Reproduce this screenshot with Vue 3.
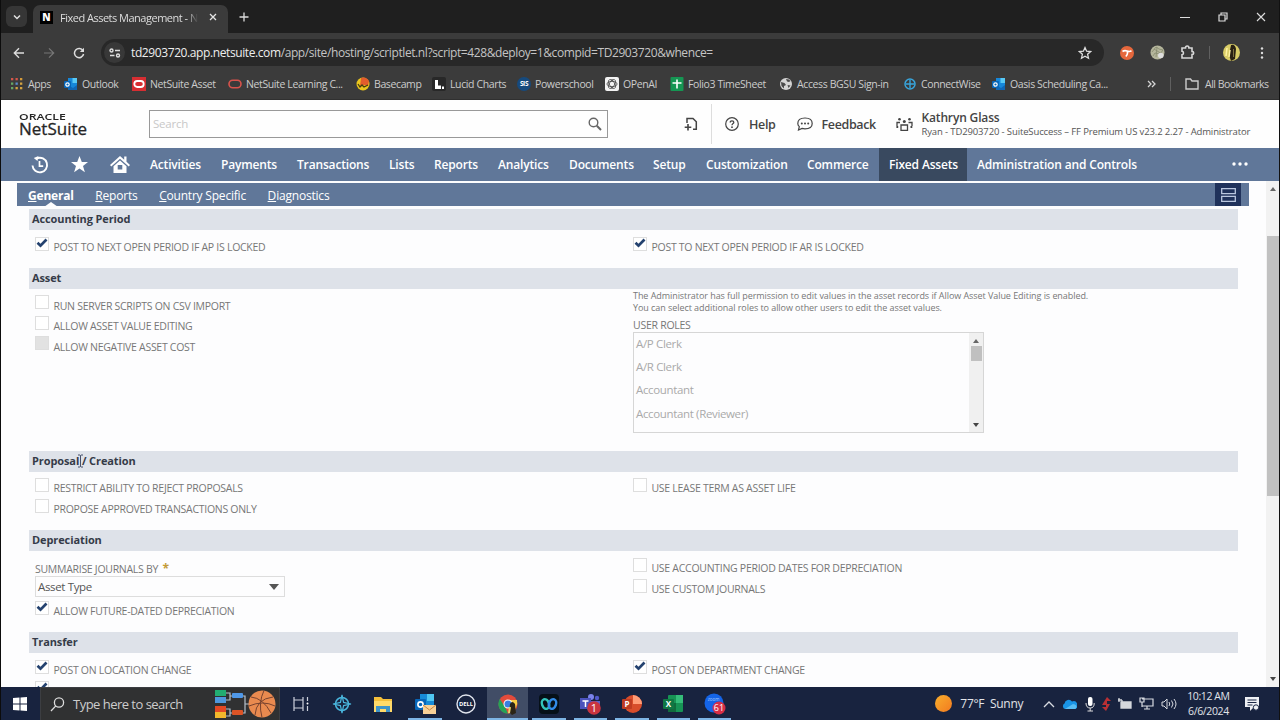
<template>
  <div class="screen">
    <!-- 浏览器标签栏 -->
    <div class="tab-strip">
      <button class="tab-search">
        <svg width="10" height="8" viewBox="0 0 10 8"><path d="M2 2.5l3 3 3-3" fill="none" stroke="#e0e0e0" stroke-width="1.5" /></svg>
      </button>
      <div class="tab">
        <span class="favicon">N</span>
        <span class="tab-title">Fixed Assets Management - Net</span>
        <svg class="tab-close" width="8" height="8" viewBox="0 0 8 8"><path d="M1 1l6 6M7 1l-6 6" stroke="#e4e4e4" stroke-width="1.3" /></svg>
      </div>
      <svg class="tab-new" width="10" height="10" viewBox="0 0 10 10"><path d="M5 0.5v9M0.500 5h9" stroke="#dcdcdc" stroke-width="1.3" /></svg>
      <div class="window-controls">
        <svg width="10" height="10" viewBox="0 0 10 10"><path d="M0 5.500h10" stroke="#ddd" /></svg>
        <svg width="10" height="10" viewBox="0 0 10 10"><path d="M1 3h6v6h-6zM3 3V1h6v6H7" fill="none" stroke="#ddd" stroke-width="1.2" /></svg>
        <svg width="10" height="10" viewBox="0 0 10 10"><path d="M1 1l8 8M9 1l-8 8" stroke="#ddd" stroke-width="1.1" /></svg>
      </div>
    </div>

    <!-- 地址栏 -->
    <div class="toolbar">
      <div class="history-buttons">
        <svg width="12" height="12" viewBox="0 0 12 12"><path d="M11 6H1.500M6 1.300L1.300 6 6 10.700" fill="none" stroke="#dedede" stroke-width="1.4" /></svg>
        <svg width="12" height="12" viewBox="0 0 12 12"><path d="M1 6h9.500M6 1.300L10.700 6 6 10.700" fill="none" stroke="#777" stroke-width="1.2" /></svg>
        <svg width="12" height="12" viewBox="0 0 12 12"><path d="M10 3.600A4.600 4.600 0 1 0 10.600 7" fill="none" stroke="#dedede" stroke-width="1.5" /><path d="M11 0.800v4.200H6.800z" fill="#dedede" /></svg>
      </div>
      <div class="address">
        <span class="site-info">
          <svg width="12" height="10" viewBox="0 0 12 10" fill="none" stroke="#ddd" stroke-width="1.4"><circle cx="2.500" cy="2.500" r="1.500" /><path d="M6 2.500h5M1 7.500h4.500" /><circle cx="9" cy="7.500" r="1.500" /></svg>
        </span>
        <span class="url"><b>td2903720.app.netsuite.com</b>/app/site/hosting/scriptlet.nl?script=428&amp;deploy=1&amp;compid=TD2903720&amp;whence=</span>
        <svg class="star" width="14" height="14" viewBox="0 0 14 14"><path d="M7 1.600l1.600 3.600 4 .4-3 2.700.9 3.900L7 10.200l-3.500 2 .9-3.900-3-2.700 4-.4z" fill="none" stroke="#dedede" stroke-width="1.300" /></svg>
      </div>
      <div class="extensions">
        <svg width="14" height="14" viewBox="0 0 14 14"><circle cx="7" cy="7" r="7" fill="#e5673c" /><path d="M2.500 5.500q2-1.500 4.500-.5t4.500-.2M7.500 5.200Q8 8.500 5.800 10.500" fill="none" stroke="#fff" stroke-width="1.600" /></svg>
        <svg width="15" height="15" viewBox="0 0 15 15"><circle cx="7.500" cy="7.500" r="7" fill="#b5b69c" /><path d="M2 7l4-5 3 2 4 1-3 4-5-1-2 3M4 4l8 5M7 2l-1 10" fill="none" stroke="#868a6e" stroke-width=".8" /><circle cx="10.800" cy="10.500" r="2.800" fill="#dedede" /></svg>
        <svg width="15" height="15" viewBox="0 0 15 15"><path d="M2 3h3.500q0-2 1.700-2t1.700 2H12v3.400q1.700.1 1.700 1.600T12 9.600V13H2V9.700q1.500-.2 1.500-1.700T2 6.300z" fill="none" stroke="#d8d8d8" stroke-width="1.600" /></svg>
        <span class="divider"></span>
        <svg width="17" height="17" viewBox="0 0 17 17"><circle cx="8.500" cy="8.500" r="8.500" fill="#d9cd67" /><path d="M8 1q4-1 5 4l-1 10-4 2-2-6z" fill="#292113" /><path d="M4 4l-1 8M7 6l-1 7" stroke="#fff3a4" stroke-width="1.500" /><path d="M10.500 5v8" stroke="#7b7040" /></svg>
        <svg width="4" height="14" viewBox="0 0 4 14" fill="#ddd"><circle cx="2" cy="2.500" r="1.200" /><circle cx="2" cy="7" r="1.200" /><circle cx="2" cy="11.500" r="1.200" /></svg>
      </div>
    </div>

    <!-- 书签栏 -->
    <div class="bookmarks">
      <div v-for="item in bookmarks" :key="item.label" class="bookmark">
        <svg width="14" height="14" viewBox="0 0 14 14">
          <g v-if="item.icon === 'apps'">
            <rect v-for="(c, i) in appColors" :key="i" :x="1 + (i % 3) * 4.500" :y="1 + Math.floor(i / 3) * 4.500" width="2.300" height="2.300" :fill="c" />
          </g>
          <g v-else-if="item.icon === 'outlook'">
            <path d="M4 1h9v11H4z" fill="#1687d9" /><path d="M8.500 1H13v5H8.500z" fill="#58c9f5" /><path d="M4 8l5 3 4-3v5H4z" fill="#1066b5" /><rect y="4" width="7" height="7" rx="1" fill="#0866b8" /><circle cx="3.500" cy="7.500" r="1.700" fill="none" stroke="#fff" stroke-width="1.200" />
          </g>
          <g v-else-if="item.icon === 'asset'">
            <rect width="14" height="14" fill="#d62e32" /><rect x="2.300" y="4" width="9.400" height="6" rx="3" fill="none" stroke="#fff" stroke-width="1.800" />
          </g>
          <rect v-else-if="item.icon === 'oracle'" x="1" y="3.300" width="12" height="7.400" rx="3.700" fill="none" stroke="#d9534c" stroke-width="1.600" />
          <g v-else-if="item.icon === 'basecamp'">
            <circle cx="7" cy="7" r="6.500" fill="#eac61d" /><path d="M5 1q5-2 8 3l-1 5-4-1-4 1z" fill="#e25c2c" /><path d="M2 7l2 3 2-2 2 2 4-2" fill="none" stroke="#463c10" stroke-width="1.300" />
          </g>
          <g v-else-if="item.icon === 'lucid'">
            <rect width="14" height="14" rx="2" fill="#282828" /><path d="M3 3h3v5.500h3V12H3zM10 9.500h2V12h-2z" fill="#fff" />
          </g>
          <g v-else-if="item.icon === 'sis'">
            <circle cx="7" cy="7" r="7" fill="#164a7d" /><text x="7" y="9.300" text-anchor="middle" font-size="6.500" font-weight="700" fill="#fff">SIS</text>
          </g>
          <g v-else-if="item.icon === 'openai'">
            <rect width="14" height="14" rx="2" fill="#f2f2f2" /><g fill="none" stroke="#444" stroke-width=".8"><ellipse v-for="a in [0, 60, 120]" :key="a" cx="7" cy="7" rx="5" ry="2.600" :transform="`rotate(${a} 7 7)`" /></g>
          </g>
          <g v-else-if="item.icon === 'sheet'">
            <rect x=".5" width="13" height="14" rx="1" fill="#159653" /><path d="M7 2.500v9M2.500 6h9" stroke="#fff" stroke-width="1.600" />
          </g>
          <g v-else-if="item.icon === 'globe'">
            <circle cx="7" cy="7" r="6" fill="#d4d4d4" /><path d="M2 5l3.500 1 1.500 2-2 1v2.500L2.500 9zM7 2l1 2.500 2 .5 1.500-1L10 2.500zM8.500 8l3 .5-2 2.500z" fill="#494949" />
          </g>
          <g v-else fill="none" stroke="#38a5dc">
            <circle cx="7" cy="7" r="5" stroke-width="1.500" /><path d="M7 2.800v8.400M2.800 7h8.400" stroke-width="1.400" />
          </g>
        </svg>
        <span>{{ item.label }}</span>
      </div>
      <svg class="more-marks" width="9" height="8" viewBox="0 0 9 8"><path d="M1 1l3 3-3 3M5 1l3 3-3 3" fill="none" stroke="#d5d5d5" stroke-width="1.300" /></svg>
      <div class="all-bookmarks">
        <svg width="14" height="12" viewBox="0 0 14 12"><path d="M1 1h4.500l1.500 2h6v8H1z" fill="none" stroke="#ccc" stroke-width="1.400" /></svg>
        <span>All Bookmarks</span>
      </div>
    </div>

    <!-- NetSuite 页头 -->
    <header class="header">
      <div class="logo">
        <span class="logo-oracle">ORACLE</span>
        <span class="logo-netsuite">NetSuite</span>
      </div>
      <div class="search">
        <span>Search</span>
        <svg width="14" height="14" viewBox="0 0 14 14" fill="none" stroke="#666"><circle cx="5.500" cy="5.500" r="4.300" stroke-width="1.400" /><path d="M8.800 8.800l4.200 4.200" stroke-width="2" /></svg>
      </div>
      <svg class="create-icon" width="14" height="14" viewBox="0 0 14 14"><path d="M3 6V1.500h6l3.300 3.300V12.300H9" fill="none" stroke="#444" stroke-width="1.500" /><path d="M4 7v6.500M.7 10.300h6.600" stroke="#444" stroke-width="1.600" /></svg>
      <div class="header-link help">
        <svg width="14" height="14" viewBox="0 0 14 14"><circle cx="7" cy="7" r="6.300" fill="none" stroke="#444" stroke-width="1.200" /><path d="M5.200 5.500q0-1.700 1.800-1.700t1.800 1.500q0 .9-1 1.400Q7 7.200 7 8.300" fill="none" stroke="#444" stroke-width="1.300" /><circle cx="7" cy="10.200" r=".9" fill="#444" /></svg>
        <span>Help</span>
      </div>
      <div class="header-link feedback">
        <svg width="16" height="14" viewBox="0 0 16 14"><path d="M1.500 13l.8-3.400Q.8 8.200.8 6.400.8 1 8 1t7.200 5.400T8 11.800q-1.700 0-3-.4z" fill="none" stroke="#444" stroke-width="1.200" /><g fill="#444"><circle cx="4.800" cy="6.400" r="1" /><circle cx="8" cy="6.400" r="1" /><circle cx="11.200" cy="6.400" r="1" /></g></svg>
        <span>Feedback</span>
      </div>
      <div class="account">
        <svg width="17" height="14" viewBox="0 0 17 14" fill="none" stroke="#444" stroke-width="1.300"><path d="M5 8h6.500v5.300H5zM1 9V5.500h3M16 9V5.500h-3.500" /><g fill="#444" stroke="none"><circle cx="8.300" cy="4.500" r="1.500" /><circle cx="3.500" cy="2.300" r="1.300" /><circle cx="13.500" cy="2.300" r="1.300" /><path d="M.4 9h1.800v2H.4zM14.500 9h1.800v2h-1.800z" /></g></svg>
        <div class="account-text">
          <span class="account-name">Kathryn Glass</span>
          <span class="account-role">Ryan - TD2903720 - SuiteSuccess – FF Premium US v23.2 2.27 - Administrator</span>
        </div>
      </div>
    </header>

    <nav class="nav">
      <div class="nav-icons">
        <svg width="18" height="18" viewBox="0 0 18 18" fill="none" stroke="#fff"><path d="M6 2.300A7.300 7.300 0 1 1 1.500 9.500" stroke-width="1.900" /><path d="M8.500 5v5.200h3.700" stroke-width="1.700" /><path d="M7.500 0L2.800 2l3.700 3z" fill="#fff" stroke="none" /></svg>
        <svg width="17" height="17" viewBox="0 0 17 17"><path d="M8.500 0l2.300 6H17l-5 3.900 1.900 6.300-5.400-3.700-5.400 3.700L5 9.900 0 6h6.200z" fill="#fff" /></svg>
        <svg width="20" height="19" viewBox="0 0 20 19"><path d="M10 1L0 10l1.300 1.400L10 3.700l8.700 7.700L20 10l-3.500-3.200V1.500h-2.300v3.200z" fill="#fff" /><path d="M10 5.500l-6.500 5.800V18h13v-6.700zM7.700 10h4.600v4.500H7.700z" fill="#fff" fill-rule="evenodd" /></svg>
      </div>
      <a v-for="item in navItems" :key="item" class="nav-item" :class="{ active: item === activeNav }" @click="activeNav = item">{{ item }}</a>
      <svg class="nav-more" width="16" height="4" viewBox="0 0 16 4" fill="#fff"><circle cx="2" cy="2" r="1.700" /><circle cx="8" cy="2" r="1.700" /><circle cx="14" cy="2" r="1.700" /></svg>
    </nav>

    <!-- 页面内容 -->
    <main class="page">
      <div class="content">
        <div class="tabs">
          <a v-for="item in tabs" :key="item" class="tab-item" :class="{ active: item === activeTab }" @click="activeTab = item"><u>{{ item[0] }}</u>{{ item.slice(1) }}</a>
          <span class="layout-toggle">
            <svg width="15" height="14" viewBox="0 0 15 14"><path d="M.7.700h13.600v5H.7zM.7 8.300h13.600v5H.7z" fill="none" stroke="#bac7df" stroke-width="1.300" /></svg>
          </span>
        </div>

        <section v-for="section in sections" :key="section.title" class="section" :class="section.name">
          <h2>{{ section.title }}</h2>
          <div class="columns">
            <div v-for="(column, index) in [section.left, section.right]" :key="index" class="column">
              <template v-if="section.name === 'asset' && index === 1">
                <p class="note">The Administrator has full permission to edit values in the asset records if Allow Asset Value Editing is enabled.<br>You can select additional roles to allow other users to edit the asset values.</p>
                <div class="roles-label">USER ROLES</div>
                <div class="roles">
                  <ul>
                    <li v-for="role in roles" :key="role">{{ role }}</li>
                  </ul>
                  <div class="roles-scroll">
                    <i class="arrow up"></i>
                    <i class="thumb"></i>
                    <i class="arrow down"></i>
                  </div>
                </div>
              </template>
              <template v-if="section.name === 'depreciation' && index === 0">
                <div class="field-label">SUMMARISE JOURNALS BY <b>*</b></div>
                <div class="select"><span>Asset Type</span><i></i></div>
              </template>
              <div v-for="field in column" :key="field.label" class="check-row" @click="toggle(field)">
                <span class="box" :class="{ disabled: field.disabled }">
                  <svg v-if="field.checked" width="12" height="10" viewBox="0 0 12 10"><path d="M1.500 4.800l3 2.900 6-6.200" fill="none" stroke="#24426f" stroke-width="2.700" /></svg>
                </span>
                <span class="check-label">{{ field.label }}</span>
              </div>
            </div>
          </div>
        </section>
        <svg class="cursor" width="7" height="14" viewBox="0 0 7 14"><path d="M1 1h2l.5.500L4 1h2M3.500 1.500v11M1 13h2l.5-.5.5.500h2" fill="none" stroke="#46506b" /></svg>
      </div>
      <div class="page-scroll">
        <i class="arrow up"></i>
        <i class="thumb"></i>
        <i class="arrow down"></i>
      </div>
    </main>

    <!-- 任务栏 -->
    <footer class="taskbar">
      <div class="start">
        <svg width="14" height="14" viewBox="0 0 14 14" fill="#fff"><path d="M0 1l6.500-.5v6H0zM7.500.400L14 0v6.500H7.500zM0 7.500h6.500v6L0 13zM7.500 7.500H14V14l-6.500-.5z" /></svg>
      </div>
      <div class="task-search">
        <svg width="15" height="15" viewBox="0 0 15 15" fill="none" stroke="#ddd" stroke-width="1.300"><circle cx="9" cy="5.500" r="4.600" /><path d="M5.800 8.900L1 14" /></svg>
        <span>Type here to search</span>
        <svg class="bracket" width="62" height="30" viewBox="0 0 62 30">
          <rect y="1" width="11" height="6" fill="#22ad72" /><rect y="8" width="11" height="6" fill="#4f98dd" /><rect y="17" width="11" height="6" fill="#e34823" /><rect y="23" width="11" height="6" fill="#f2b82c" />
          <path d="M11 4h4v7h-4M15 7h4M11 20h4v7h-4M15 24h4M26 7h4v17h-4M30 15h5" fill="none" stroke="#b6c1cb" stroke-width="1.200" />
          <rect x="17" y="4" width="11" height="5" rx="1" fill="#4f98e8" /><rect x="17" y="21" width="11" height="5" rx="1" fill="#dc5426" />
          <circle cx="47" cy="15" r="13.500" fill="#e98a4f" /><path d="M36 8q12 1 20 16M40 26q1-16 18-18M34 17q14-6 26 0M49 1.500q-6 12-2 27" fill="none" stroke="#77422f" />
        </svg>
      </div>
      <div class="apps">
        <div v-for="app in taskApps" :key="app.name" class="app" :class="{ running: app.running, focused: app.name === 'chrome' }">
          <svg width="22" height="22" viewBox="0 0 22 22">
            <g v-if="app.name === 'taskview'" fill="none" stroke="#cdd1dc" stroke-width="1.200"><path d="M4 4v3h9V4M4 18v-3h9v3M4 7v8M13 7v8M17.500 4v4M17.500 13v5" /><circle cx="17.500" cy="10.500" r="1" fill="#fff" stroke="none" /></g>
            <g v-else-if="app.name === 'compass'" fill="none" stroke="#49b5dc"><circle cx="11" cy="11" r="6.500" stroke-width="1.500" /><path d="M11 2l1.600 7.400L20 11l-7.400 1.600L11 20l-1.600-7.400L2 11l7.400-1.600z" stroke-width="1.200" /></g>
            <g v-else-if="app.name === 'files'"><path d="M2 4h7l2 2h9v13H2z" fill="#f4bf3b" /><path d="M2 8h18v11H2z" fill="#ffda69" /><path d="M4 19v-6h14v6h-4v-3H8v3z" fill="#3e94c9" /></g>
            <g v-else-if="app.name === 'outlook'"><path d="M6 1h14v15H6z" fill="#168bd8" /><path d="M13 1h7v7h-7z" fill="#50c7f2" /><rect x="1" y="6" width="11" height="11" rx="1" fill="#0866b8" /><circle cx="6.500" cy="11.500" r="2.600" fill="none" stroke="#fff" stroke-width="1.600" /><path d="M9 12h13v9H9z" fill="#f9d197" /><path d="M9 12l6.500 5 6.500-5" fill="none" stroke="#c78842" /></g>
            <g v-else-if="app.name === 'dell'"><circle cx="11" cy="11" r="9" fill="none" stroke="#e1e5ed" stroke-width="1.400" /><text x="11" y="13" text-anchor="middle" font-size="5.800" font-weight="700" fill="#fff">DELL</text></g>
            <g v-else-if="app.name === 'chrome'"><circle cx="11" cy="11" r="9.500" fill="#e34b3b" /><path d="M2.800 6L8 14l3 6.500A9.500 9.500 0 0 1 2.800 6z" fill="#24a356" /><path d="M11 7h9q2 9-9 13.500l4-7z" fill="#f8cd43" /><circle cx="11" cy="11" r="4.500" fill="#fff" /><circle cx="11" cy="11" r="3.500" fill="#397fe1" /><path d="M13 11q2-4 5 0l1 9-4 2-3-3z" fill="#2b2517" /><path d="M13 14l-1 6" stroke="#e8d46d" stroke-width="2" /></g>
            <g v-else-if="app.name === 'webex'"><rect x="1" y="1" width="20" height="20" rx="4" fill="#061018" /><ellipse cx="7.500" cy="11" rx="3.500" ry="5" fill="none" stroke="#33c5bb" stroke-width="2.500" transform="rotate(-20 7.500 11)" /><ellipse cx="14.500" cy="11" rx="3.500" ry="5" fill="none" stroke="#328be7" stroke-width="2.500" transform="rotate(20 14.500 11)" /></g>
            <g v-else-if="app.name === 'teams'"><circle cx="12" cy="4" r="3" fill="#7b83eb" /><circle cx="18" cy="5" r="2.200" fill="#5059c9" /><path d="M8 8h13v7q-2 5-7 5t-6-5z" fill="#5c62c9" /><rect x="1" y="5" width="11" height="11" fill="#4b53bc" /><path d="M3.500 8h6M6.500 8v6" stroke="#fff" stroke-width="1.500" /><circle cx="15" cy="15" r="6.800" fill="#c9343f" /><text x="15" y="19" text-anchor="middle" font-size="11" fill="#fff">1</text></g>
            <g v-else-if="app.name === 'powerpoint'"><circle cx="12" cy="11" r="9" fill="#d84d2b" /><path d="M12 2a9 9 0 0 1 9 9h-9z" fill="#ff9c76" /><rect x="1" y="6" width="10" height="10" rx="1" fill="#bf3b21" /><text x="6" y="14" text-anchor="middle" font-size="8" font-weight="700" fill="#fff">P</text></g>
            <g v-else-if="app.name === 'excel'"><rect x="6" y="2" width="15" height="17" rx="1" fill="#179455" /><path d="M14 2h7v8h-7z" fill="#35bd79" /><path d="M6 10h8v9H6z" fill="#116c3d" /><rect x="1" y="6" width="11" height="10" rx="1" fill="#107743" /><text x="6.500" y="14" text-anchor="middle" font-size="8" font-weight="700" fill="#fff">X</text></g>
            <g v-else><circle cx="10" cy="10" r="9.500" fill="#1464e8" /><text x="9.500" y="7.500" text-anchor="middle" font-size="4.500" fill="#a9cbff">zoom</text><circle cx="15" cy="15" r="6.500" fill="#d62e46" /><text x="15" y="18.300" text-anchor="middle" font-size="9" fill="#fff">61</text></g>
          </svg>
        </div>
      </div>
      <div class="weather"><i></i><span>77°F&nbsp; Sunny</span></div>
      <div class="tray">
        <svg width="12" height="10" viewBox="0 0 12 10"><path d="M1 8l5-5 5 5" fill="none" stroke="#d8dbe1" stroke-width="1.300" /></svg>
        <svg width="15" height="12" viewBox="0 0 15 12"><path d="M3 11a3 3 0 0 1-.5-5.500A4.200 4.200 0 0 1 10 3.500 4 4 0 0 1 13 11z" fill="#1994e5" /><path d="M3 11l8-5q4 1 3.500 3T13 11z" fill="#58bdf2" /></svg>
        <svg width="10" height="16" viewBox="0 0 10 16"><rect x="3" y="1" width="4.500" height="9" rx="2" fill="#fff" /><path d="M1 7q0 5 4.200 5t4-5M5.200 12v3M2.500 15h5.500" fill="none" stroke="#ddd" /></svg>
        <svg width="9" height="14" viewBox="0 0 9 14"><path d="M5 0l4 4H5v3h3l-4 7-4-4h4V8H0z" fill="#ba3034" /></svg>
        <svg width="14" height="12" viewBox="0 0 14 12"><path d="M3 4h10v6H3zM0 2h4M1 0v4M4 2v3" fill="#d4d7dc" stroke="#d4d7dc" stroke-width="1.300" /></svg>
        <svg width="15" height="13" viewBox="0 0 15 13" fill="none" stroke="#d8dbe1"><path d="M3 2h11v7H3M8 9v3M5 12h6M1 1h4v4H1zM3 5v5" stroke-width="1.200" /></svg>
        <svg width="16" height="12" viewBox="0 0 16 12" fill="none" stroke="#d8dbe1"><path d="M1 4h2l3-3v10L3 8H1zM8 4q1.500 2 0 4M10.500 2.500q3 3.500 0 7M13 1q4 5 0 10" /></svg>
      </div>
      <div class="clock"><span>10:12 AM</span><span>6/6/2024</span></div>
      <svg class="notify" width="14" height="14" viewBox="0 0 14 14"><path d="M0 0h14v10H9l-4 4v-4H0z" fill="#eef0f4" /><path d="M2.500 3h9M2.500 5.500h9M2.500 8h5" stroke="#1b2745" /><circle cx="11" cy="10.500" r="2.700" fill="#eef0f4" stroke="#1b2745" /></svg>
    </footer>
  </div>
</template>

<script setup>
import { ref, reactive } from 'vue'

// 书签
const bookmarks = [
  { label: 'Apps', icon: 'apps' },
  { label: 'Outlook', icon: 'outlook' },
  { label: 'NetSuite Asset', icon: 'asset' },
  { label: 'NetSuite Learning C...', icon: 'oracle' },
  { label: 'Basecamp', icon: 'basecamp' },
  { label: 'Lucid Charts', icon: 'lucid' },
  { label: 'Powerschool', icon: 'sis' },
  { label: 'OPenAI', icon: 'openai' },
  { label: 'Folio3 TimeSheet', icon: 'sheet' },
  { label: 'Access BGSU Sign-in', icon: 'globe' },
  { label: 'ConnectWise', icon: 'connect' },
  { label: 'Oasis Scheduling Ca...', icon: 'outlook' }
]
const appColors = ['#d4564a', '#d4564a', '#d49a3a', '#65a765', '#5c8dcc', '#d4a341', '#65a765', '#d4a341', '#d4a341']

// 主导航
const navItems = ['Activities', 'Payments', 'Transactions', 'Lists', 'Reports', 'Analytics', 'Documents', 'Setup', 'Customization', 'Commerce', 'Fixed Assets', 'Administration and Controls']
const activeNav = ref('Fixed Assets')

const tabs = ['General', 'Reports', 'Country Specific', 'Diagnostics']
const activeTab = ref('General')

const roles = ['A/P Clerk', 'A/R Clerk', 'Accountant', 'Accountant (Reviewer)']

// 设置分组
const sections = reactive([
  {
    name: 'period',
    title: 'Accounting Period',
    left: [{ label: 'POST TO NEXT OPEN PERIOD IF AP IS LOCKED', checked: true }],
    right: [{ label: 'POST TO NEXT OPEN PERIOD IF AR IS LOCKED', checked: true }]
  },
  {
    name: 'asset',
    title: 'Asset',
    left: [
      { label: 'RUN SERVER SCRIPTS ON CSV IMPORT' },
      { label: 'ALLOW ASSET VALUE EDITING' },
      { label: 'ALLOW NEGATIVE ASSET COST', disabled: true }
    ],
    right: []
  },
  {
    name: 'proposal',
    title: 'Proposal / Creation',
    left: [{ label: 'RESTRICT ABILITY TO REJECT PROPOSALS' }, { label: 'PROPOSE APPROVED TRANSACTIONS ONLY' }],
    right: [{ label: 'USE LEASE TERM AS ASSET LIFE' }]
  },
  {
    name: 'depreciation',
    title: 'Depreciation',
    left: [{ label: 'ALLOW FUTURE-DATED DEPRECIATION', checked: true }],
    right: [{ label: 'USE ACCOUNTING PERIOD DATES FOR DEPRECIATION' }, { label: 'USE CUSTOM JOURNALS' }]
  },
  {
    name: 'transfer',
    title: 'Transfer',
    left: [{ label: 'POST ON LOCATION CHANGE', checked: true }, { label: '', checked: true }],
    right: [{ label: 'POST ON DEPARTMENT CHANGE', checked: true }]
  }
])

const toggle = (field) => {
  if (!field.disabled) field.checked = !field.checked
}

const taskApps = [
  { name: 'taskview' },
  { name: 'compass' },
  { name: 'files' },
  { name: 'outlook', running: true },
  { name: 'dell' },
  { name: 'chrome', running: true },
  { name: 'webex', running: true },
  { name: 'teams', running: true },
  { name: 'powerpoint', running: true },
  { name: 'excel', running: true },
  { name: 'zoom', running: true }
]
</script>

<style>
body {
  margin: 0;
  overflow: hidden;
}
</style>

<style scoped>
.screen {
  width: 1280px;
  height: 720px;
  box-sizing: border-box;
  border-left: 1px solid #0c0c0c;
  border-right: 1px solid #111;
  display: flex;
  flex-direction: column;
  overflow: hidden;
  background: #fdfdfe;
  font-family: "Open Sans", "Noto Sans", sans-serif;
  white-space: nowrap;
}

.screen svg {
  display: block;
  flex: none;
}

/* 标签栏 */
.tab-strip {
  height: 33px;
  flex: none;
  display: flex;
  align-items: center;
  background: #1f1f1f;
  color: #ddd;
}

.tab-search {
  width: 21px;
  height: 21px;
  margin-left: 5px;
  padding: 0;
  border: 0;
  border-radius: 6px;
  background: #363636;
  display: grid;
  place-items: center;
}

.tab {
  width: 195px;
  height: 28px;
  margin-left: 6px;
  align-self: flex-end;
  display: flex;
  align-items: center;
  box-sizing: border-box;
  padding: 0 11px 4px 7px;
  background: #3b3b3b;
  border-radius: 7px 7px 0 0;
}

.favicon {
  width: 13px;
  height: 13px;
  background: #000;
  color: #fff;
  font-size: 10px;
  font-weight: 800;
  line-height: 13px;
  text-align: center;
}

.tab-title {
  width: 138px;
  margin-left: 7px;
  overflow: hidden;
  font-size: 11px;
  letter-spacing: -0.5px;
  -webkit-mask-image: linear-gradient(to right, #000 92%, transparent);
  mask-image: linear-gradient(to right, #000 92%, transparent);
}

.tab-close {
  margin-left: auto;
}

.tab-new {
  margin-left: 11px;
}

.window-controls {
  margin-left: auto;
  margin-right: 13px;
  display: flex;
  gap: 28px;
}

/* 地址栏 */
.toolbar {
  height: 35px;
  flex: none;
  box-sizing: border-box;
  padding-top: 4px;
  display: flex;
  align-items: center;
  background: #3b3b3b;
}

.history-buttons {
  width: 100px;
  box-sizing: border-box;
  padding-left: 12px;
  display: flex;
  gap: 18px;
}

.address {
  width: 1003px;
  height: 27px;
  display: flex;
  align-items: center;
  border-radius: 14px;
  background: #282828;
  color: #c4c4c4;
}

.site-info {
  width: 21px;
  height: 21px;
  margin-left: 3px;
  border-radius: 50%;
  background: #383838;
  display: grid;
  place-items: center;
}

.url {
  margin-left: 6px;
  font-size: 12px;
  letter-spacing: -0.4px;
}

.url b {
  font-weight: 400;
  color: #eee;
}

.star {
  margin-left: auto;
  margin-right: 12px;
}

.extensions {
  display: flex;
  align-items: center;
  margin-left: 16px;
}

.extensions svg + svg {
  margin-left: 15.5px;
}

.divider {
  width: 1px;
  height: 13px;
  margin: 0 13px 0 14px;
  background: #606060;
}

.extensions .divider + svg + svg {
  margin-left: 20px;
}

/* 书签栏 */
.bookmarks {
  height: 32px;
  flex: none;
  box-sizing: border-box;
  padding-left: 9px;
  display: grid;
  grid-template-columns: 54px 68px 96px 128px 76px 85px 88px 65px 109px 124px 89px 155px 23px 1fr;
  align-items: center;
  background: #3b3b3b;
  border-bottom: 1px solid #303030;
  color: #ccc;
  font-size: 10.5px;
  letter-spacing: -0.38px;
}

.bookmark {
  display: flex;
  align-items: center;
  gap: 4px;
}

.all-bookmarks {
  display: flex;
  align-items: center;
  gap: 6px;
  padding-left: 14px;
  border-left: 1px solid #606060;
  letter-spacing: -0.5px;
}

/* 页头 */
.header {
  height: 48px;
  flex: none;
  display: flex;
  align-items: center;
  background: #fefefe;
  color: #444;
}

.logo {
  width: 130px;
  margin-left: 18px;
  display: flex;
  flex-direction: column;
  color: #252525;
}

.logo-oracle {
  height: 9px;
  font-size: 9px;
  font-weight: 600;
  line-height: 11px;
  transform: scaleX(1.36);
  transform-origin: left;
}

.logo-netsuite {
  font-size: 17px;
  line-height: 18px;
  -webkit-text-stroke: 0.3px #252525;
}

.search {
  width: 459px;
  height: 28px;
  box-sizing: border-box;
  padding: 0 5px 1px 3px;
  border: 1px solid #999;
  display: flex;
  align-items: center;
  justify-content: space-between;
  color: #c8c8c8;
  font-size: 11.5px;
  letter-spacing: -0.2px;
}

.create-icon {
  margin-left: 76px;
}

.header-link {
  display: flex;
  align-items: center;
  font-size: 12.5px;
  font-weight: 600;
  letter-spacing: -0.35px;
}

.help {
  height: 40px;
  margin-left: 13px;
  padding-left: 13px;
  gap: 10px;
  border-left: 1px solid #ddd;
}

.feedback {
  width: 78px;
  margin-left: 22px;
  gap: 8px;
}

.account {
  display: flex;
  align-items: center;
  gap: 8px;
  margin-left: 21px;
}

.account-text {
  display: flex;
  flex-direction: column;
}

.account-name {
  font-size: 12px;
  font-weight: 600;
  line-height: 15px;
  letter-spacing: -0.15px;
}

.account-role {
  font-size: 9.5px;
  line-height: 14px;
  letter-spacing: -0.13px;
  color: #555;
}

/* 主导航 */
.nav {
  height: 33px;
  flex: none;
  display: grid;
  grid-template-columns: 139px 71px 76px 92px 45px 64px 71px 84px 53px 101px 82px 88px 266px auto;
  background: #607799;
  color: #fff;
  font-size: 12px;
  font-weight: 600;
  letter-spacing: -0.16px;
}

.nav-icons {
  display: flex;
  align-items: center;
  padding-left: 30px;
  gap: 22px;
}

.nav-item {
  box-sizing: border-box;
  height: 33px;
  padding: 1px 0 0 10px;
  line-height: 32px;
  cursor: pointer;
}

.nav-item.active {
  background: #39495f;
}

.nav-more {
  margin: 14px 0 0 -1px;
}

/* 页面主体 */
.page {
  height: 506px;
  flex: none;
  display: flex;
  justify-content: space-between;
  overflow: hidden;
}

.content {
  position: relative;
  width: 1249px;
}

.tabs {
  height: 23px;
  margin: 2px 1px 3px 16px;
  display: flex;
  align-items: center;
  background: #607799;
  color: #fff;
  font-size: 12px;
  letter-spacing: -0.2px;
}

.tab-item {
  position: relative;
  padding-top: 1px;
  margin-left: 21.6px;
  cursor: pointer;
}

.tab-item:first-child {
  margin-left: 11px;
}

.tab-item.active {
  font-weight: 700;
}

.tab-item.active::after {
  content: "";
  position: absolute;
  left: 50%;
  bottom: -3px;
  margin-left: -7px;
  border: 7px solid transparent;
  border-top: 0;
  border-bottom: 5px solid #fdfdfe;
}

.layout-toggle {
  width: 26px;
  height: 23px;
  margin-left: auto;
  margin-right: 8px;
  display: grid;
  place-items: center;
  background: #20325b;
}

/* 分组 */
.section {
  width: 1209px;
  margin-left: 28px;
}

.period {
  height: 59px;
}

.asset {
  height: 183px;
}

.proposal {
  height: 79px;
}

.depreciation {
  height: 102px;
}

.section h2 {
  height: 21px;
  margin: 0;
  padding-left: 3px;
  background: #dee2e9;
  color: #353b48;
  font-size: 11px;
  font-weight: 700;
  line-height: 20px;
  letter-spacing: -0.1px;
}

.columns {
  display: grid;
  grid-template-columns: 598px 1fr;
  padding: 7px 0 0 6px;
}

.asset .columns,
.proposal .columns {
  padding-top: 6px;
}

.check-row {
  height: 20.6px;
  display: flex;
  align-items: flex-start;
  gap: 4px;
}

.box {
  width: 14px;
  height: 14px;
  flex: none;
  box-sizing: border-box;
  border: 1px solid #dedede;
  background: #fff;
}

.box.disabled {
  background: #e2e2e2;
}

.check-label {
  padding: 3px 0 0 0.5px;
  font-size: 10.5px;
  line-height: 14px;
  letter-spacing: -0.28px;
  color: #777;
}

.asset .check-label {
  padding-top: 3.5px;
}

.note {
  margin: -5px 0 0;
  font-size: 9px;
  line-height: 12px;
  letter-spacing: -0.06px;
  color: #777;
}

.roles-label {
  margin-top: 4px;
  color: #777;
  font-size: 10.5px;
  line-height: 14px;
  letter-spacing: -0.26px;
}

.roles {
  width: 351px;
  height: 101px;
  box-sizing: border-box;
  border: 1px solid #d6d6d6;
  display: flex;
  justify-content: space-between;
  overflow: hidden;
}

.roles ul {
  margin: 0;
  padding: 0 0 0 2px;
  list-style: none;
}

.roles li {
  height: 23.2px;
  color: #aaa;
  font-size: 11.5px;
  line-height: 22px;
  letter-spacing: -0.35px;
}

.roles-scroll {
  width: 14px;
  display: flex;
  flex-direction: column;
  align-items: center;
  background: #f0f0f0;
}

.arrow {
  border: 3px solid transparent;
}

.arrow.up {
  border-top: 0;
  border-bottom: 4px solid #666;
}

.arrow.down {
  margin-top: auto;
  border-bottom: 0;
  border-top: 4px solid #444;
}

.roles-scroll .up {
  margin-top: 6px;
}

.roles-scroll .down {
  margin-bottom: 5px;
}

.roles-scroll .thumb {
  width: 11px;
  height: 15px;
  margin-top: 3px;
  background: #c0c0c0;
}

.field-label {
  margin-top: 2px;
  height: 16px;
  color: #777;
  font-size: 10.5px;
  line-height: 18px;
  letter-spacing: -0.28px;
}

.field-label b {
  color: #c39b37;
  font-size: 12px;
  margin-left: 2px;
}

.select {
  width: 250px;
  height: 21px;
  margin-bottom: 4px;
  box-sizing: border-box;
  border: 1px solid #ddd;
  padding: 0 5px 0 2px;
  display: flex;
  align-items: center;
  justify-content: space-between;
  color: #555;
  font-size: 11.5px;
  letter-spacing: -0.35px;
}

.select i {
  border: 5px solid transparent;
  border-top: 6px solid #555;
  border-bottom: 0;
}

.cursor {
  position: absolute;
  left: 76px;
  top: 273px;
}

.page-scroll {
  width: 13px;
  display: flex;
  flex-direction: column;
  align-items: center;
  background: #f2f2f2;
}

.page-scroll .up {
  margin-top: 6px;
}

.page-scroll .thumb {
  width: 12px;
  height: 260px;
  margin-top: 45px;
  background: #c1c1c1;
}

.page-scroll .down {
  margin-bottom: 6px;
}

/* 任务栏 */
.taskbar {
  height: 33px;
  flex: none;
  display: flex;
  align-items: center;
  background: #18233f;
  color: #e2e4e9;
}

.start {
  width: 39px;
  padding-left: 12px;
  box-sizing: border-box;
}

.task-search {
  width: 240px;
  height: 33px;
  box-sizing: border-box;
  padding: 0 2px 0 9px;
  display: flex;
  align-items: center;
  background: #303132;
  border: 1px solid #3c3e42;
  border-bottom: 0;
  color: #ccc;
  font-size: 13px;
}

.task-search span {
  margin-left: 8px;
  letter-spacing: -0.52px;
}

.bracket {
  margin-left: auto;
}

.apps {
  display: flex;
  height: 33px;
}

.app {
  width: 41.4px;
  box-sizing: border-box;
  position: relative;
  display: grid;
  place-items: center;
}

.app.running::after {
  content: "";
  position: absolute;
  left: 4px;
  right: 4px;
  bottom: 0;
  height: 2px;
  background: #7eb5e5;
}

.app.focused {
  background: #414d66;
}

.app.focused::after {
  left: 0;
  right: 0;
}

.weather {
  display: flex;
  align-items: center;
  gap: 8px;
  margin-left: 200px;
  font-size: 12px;
  letter-spacing: -0.27px;
}

.weather i {
  width: 17px;
  height: 17px;
  border-radius: 50%;
  background: linear-gradient(135deg, #f8ae2c, #f27a20);
}

.tray {
  display: flex;
  align-items: center;
  gap: 7.2px;
  margin-left: 20px;
}

.clock {
  width: 44px;
  margin-left: 9px;
  display: flex;
  flex-direction: column;
  align-items: center;
  font-size: 10.5px;
  line-height: 15px;
  letter-spacing: -0.38px;
}

.notify {
  margin-left: auto;
  margin-right: 20px;
}
</style>
